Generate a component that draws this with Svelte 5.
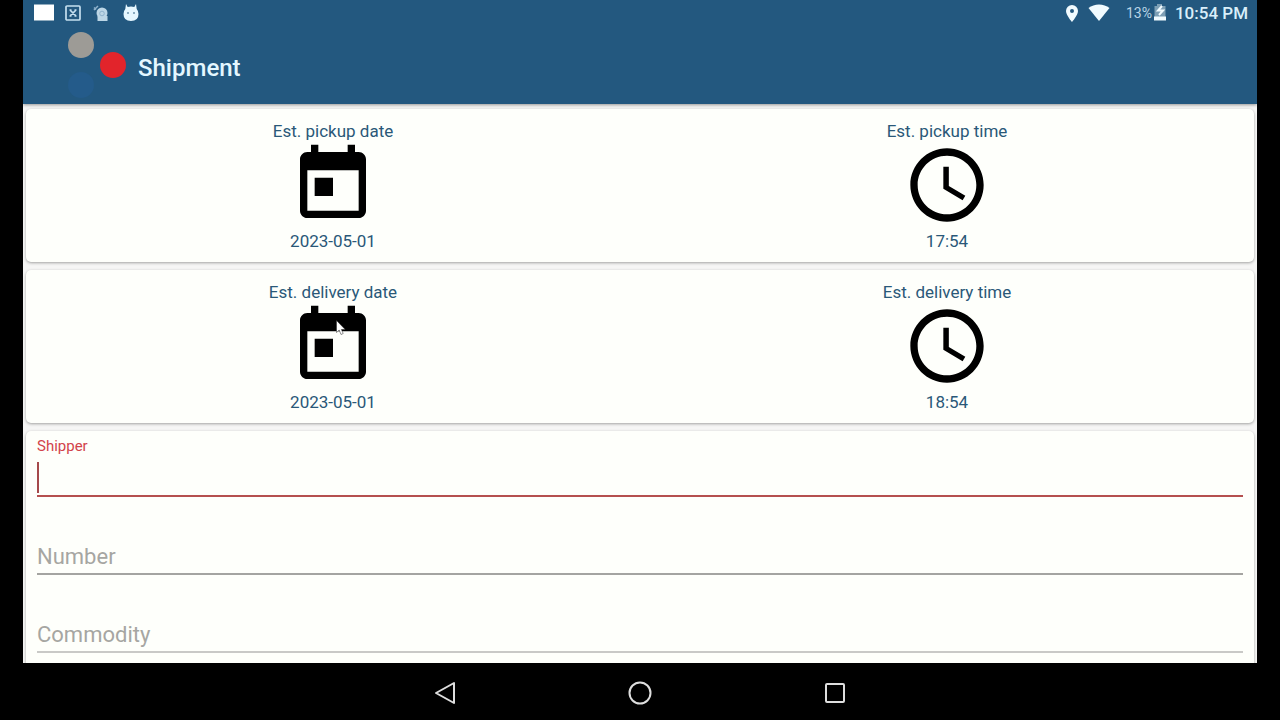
<script>
	let schedule = $state([
		[
			{ label: 'Est. pickup date', type: 'date', value: '2023-05-01' },
			{ label: 'Est. pickup time', type: 'time', value: '17:54' }
		],
		[
			{ label: 'Est. delivery date', type: 'date', value: '2023-05-01', pointer: true },
			{ label: 'Est. delivery time', type: 'time', value: '18:54' }
		]
	]);

	let fields = $state([
		{ id: 'shipper', label: 'Shipper', value: '' },
		{ id: 'number', label: 'Number', value: '' },
		{ id: 'commodity', label: 'Commodity', value: '' }
	]);

	let active = $state('shipper');
</script>

<div class="device">
	<div class="status">
		<svg width="20" height="18" viewBox="0 0 20 18"><path fill="#fff" d="M0 .5h20v16H0z" /></svg>
		<svg class="boxed" width="16" height="18" viewBox="0 0 16 18">
			<rect x="1" y="2" width="14" height="14" rx="1" />
			<path d="M5 6l6 6M11 6l-6 6M4.500 6h2M9.500 6h2M4.500 12h2M9.500 12h2" />
		</svg>
		<svg width="16" height="18" viewBox="0 0 16 18">
			<path fill="none" stroke="#8fb2cc" stroke-width="1.5" d="M1 6l4-4M1 3.500l2 2" />
			<circle cx="9" cy="9" r="5.500" fill="#bcd6e6" />
			<path fill="#bcd6e6" d="M4.500 12h10v5h-10z" />
			<circle cx="9" cy="9.500" r="2.300" fill="none" stroke="#8fb2cc" />
		</svg>
		<svg class="cat" width="16" height="18" viewBox="0 0 16 18">
			<path fill="#e6f7ff" d="M3 0l1.700 3Q8 2 11.300 3L13 0l.7 5Q15.500 7 15.500 10q0 7-7.500 7T.5 10q0-3 1.800-5z" />
			<circle cx="5" cy="9" r="1" fill="#6d93ac" />
			<circle cx="11" cy="9" r="1" fill="#6d93ac" />
		</svg>
		<span class="space"></span>
		<svg width="14" height="18" viewBox="0 0 14 18">
			<path fill="#f1fbff" fill-rule="evenodd" d="M7 1a6 6 0 0 0-6 6c0 4.200 6 11 6 11s6-6.800 6-11a6 6 0 0 0-6-6zm0 4a2 2 0 1 1 0 4 2 2 0 0 1 0-4z" />
		</svg>
		<svg class="wifi" width="22" height="18" viewBox="0 0 22 18">
			<path fill="#f1fbff" d="M11 17L.5 4Q5 .5 11 .5t10.500 3.500z" />
		</svg>
		<span class="percent">13%</span>
		<svg width="14" height="18" viewBox="0 0 14 18">
			<path fill="#7d9fb5" d="M4 0h5v2h3.500v11h-11V2H4z" />
			<path fill="#f1fbff" d="M1 12.500h12v4H1z" />
			<path fill="none" stroke="#f1fbff" stroke-width="2" d="M9 2L5 6.500h5L6 11" />
		</svg>
		<span class="clock">10:54 PM</span>
	</div>

	<header>
		<svg width="58" height="68" viewBox="0 0 58 68">
			<circle cx="13" cy="14" r="13" fill="#9d9b96" />
			<circle cx="45" cy="34" r="13" fill="#e2242b" />
			<circle cx="13" cy="54" r="13" fill="#245b8a" />
		</svg>
		<h1>Shipment</h1>
	</header>

	<main>
		{#each schedule as row}
			<section class="card row">
				{#each row as item}
					<button class="pick">
						<span class="label">{item.label}</span>
						<span class="icon">
							<svg width="88" height="88" viewBox="0 0 24 24">
								{#if item.type === 'date'}
									<path d="M19 3h-1V1h-2v2H8V1H6v2H5c-1.110 0-2 .9-2 2v14c0 1.100.89 2 2 2h14c1.100 0 2-.9 2-2V5c0-1.100-.9-2-2-2zm0 16H5V8h14v11zM7 10h5v5H7z" />
								{:else}
									<path d="M12 2C6.500 2 2 6.500 2 12s4.500 10 10 10 10-4.500 10-10S17.500 2 12 2zm0 18c-4.420 0-8-3.580-8-8s3.580-8 8-8 8 3.580 8 8-3.580 8-8 8zM12.500 7H11v6l5.250 3.150.75-1.230-4.500-2.670z" />
								{/if}
							</svg>
							{#if item.pointer}
								<svg class="pointer" width="10" height="16" viewBox="0 0 10 16">
									<path fill="#fff" stroke="#222" stroke-width=".5" d="M.5.5v12l2.700-2.300L5 14.500l2.200-1L5.400 9.500h3.800z" />
								</svg>
							{/if}
						</span>
						<span class="value">{item.value}</span>
					</button>
				{/each}
			</section>
		{/each}

		<form class="card form">
			{#each fields as field}
				<div class="field" class:active={active === field.id} class:filled={field.value !== ''}>
					<label for={field.id}>{field.label}</label>
					<input id={field.id} type="text" autocomplete="off" bind:value={field.value} onfocus={() => (active = field.id)} />
					{#if active === field.id && field.value === ''}
						<span class="caret"></span>
					{/if}
				</div>
			{/each}
		</form>
	</main>

	<nav>
		<button aria-label="Back">
			<svg width="24" height="24" viewBox="0 0 24 24"><path d="M21 2v20L3 12z" /></svg>
		</button>
		<button aria-label="Home">
			<svg width="24" height="24" viewBox="0 0 24 24"><circle cx="12" cy="12" r="10.500" /></svg>
		</button>
		<button aria-label="Recent apps">
			<svg width="24" height="24" viewBox="0 0 24 24"><rect x="3" y="3" width="18" height="18" rx="1" /></svg>
		</button>
	</nav>
</div>

<style>
	:global(body) { background: #000; }

	.device {
		display: flex;
		flex-direction: column;
		height: 100vh;
		margin: 0 23px;
		font-family: Roboto, sans-serif;
	}

	svg { display: block; flex: none; }

	button {
		border: 0;
		padding: 0;
		background: none;
		font: inherit;
		cursor: pointer;
	}

	.status {
		display: flex;
		align-items: center;
		flex: none;
		height: 26px;
		padding: 0 9px 0 11px;
		background: #23587f;
		color: #d9effa;
		z-index: 2;
	}

	.boxed { margin: 0 12px 0 11px; fill: none; stroke: #c5dfef; stroke-width: 1.7; }
	.cat { margin-left: 14px; }
	.space { flex: 1; }
	.wifi { margin: 0 16px 0 9px; }
	.percent { font-size: 14px; margin-right: 1px; color: #b9d5e6; }
	.clock { font-size: 17px; font-weight: 500; margin-left: 8px; }

	header {
		display: flex;
		align-items: center;
		flex: none;
		gap: 12px;
		height: 78px;
		padding-left: 45px;
		background: #23587f;
		box-shadow: 0 1px 3px rgba(0, 0, 0, 0.4);
		z-index: 1;
	}

	h1 {
		margin: 0;
		padding-top: 5px;
		font-size: 24px;
		font-weight: 500;
		color: #e4f7ff;
	}

	main {
		display: flex;
		flex-direction: column;
		flex: 1;
		gap: 8px;
		min-height: 0;
		overflow: hidden;
		padding: 5px 3px 0;
		background: #f6f6f5;
	}

	.card {
		flex: none;
		border-radius: 5px;
		background: #fefffb;
		box-shadow: 0 1px 3px rgba(0, 0, 0, 0.35);
	}

	.row { display: flex; }

	.pick {
		display: flex;
		flex: 1;
		flex-direction: column;
		align-items: center;
		padding: 12px 0 9px;
		font-size: 17px;
		color: #2a5878;
	}

	.label { line-height: 20px; }
	.value { line-height: 24px; }
	.icon { position: relative; }
	.pointer { position: absolute; left: 47px; top: 18px; }

	.form {
		display: grid;
		gap: 18px;
		padding: 6px 11px 20px;
	}

	.field { position: relative; padding-top: 18px; }

	.field label {
		position: absolute;
		left: 0;
		top: 29px;
		font-size: 22px;
		line-height: 26px;
		color: #a6a6a2;
		pointer-events: none;
	}

	.field.active label, .field.filled label {
		top: 0;
		font-size: 15px;
		line-height: 18px;
	}

	.field.active label { color: #d2434a; }

	.field input {
		display: block;
		box-sizing: border-box;
		width: 100%;
		height: 42px;
		padding: 5px 0 0;
		border: 0;
		border-bottom: 2px solid #a4a4a1;
		border-radius: 0;
		outline: 0;
		background: none;
		font: inherit;
		font-size: 22px;
		color: #222;
	}

	.field.active input { border-color: #b5504f; }
	.field:last-child input { border-color: #c9c9c7; }

	.caret {
		position: absolute;
		left: 0;
		bottom: 4px;
		width: 2px;
		height: 31px;
		background: #a5494b;
	}

	nav {
		display: flex;
		justify-content: center;
		flex: none;
		height: 57px;
		background: #000;
		z-index: 1;
	}

	nav button {
		display: flex;
		align-items: center;
		justify-content: center;
		width: 195px;
		padding-top: 2px;
	}

	nav svg { fill: none; stroke: #dedede; stroke-width: 2; stroke-linejoin: round; }
</style>
